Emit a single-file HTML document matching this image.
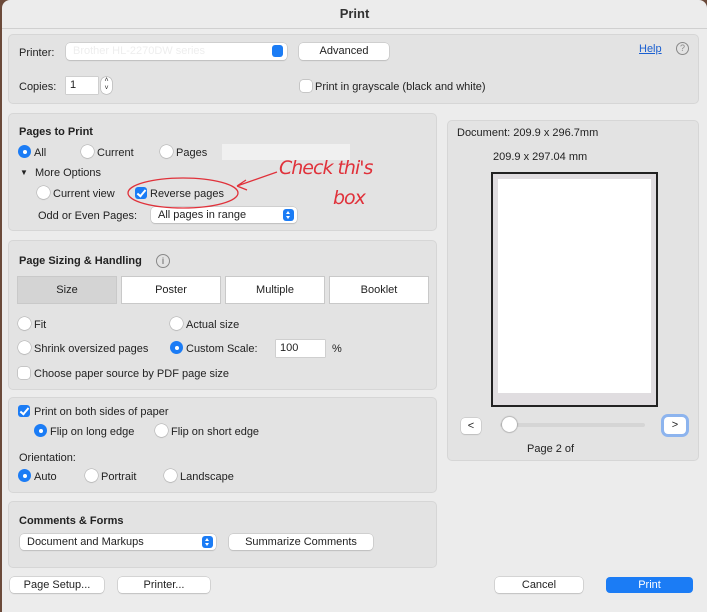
<!DOCTYPE html>
<html><head><meta charset="utf-8"><style>
*{box-sizing:border-box;margin:0;padding:0}
body{width:707px;height:612px;overflow:hidden;background:#6b4a3a;font-family:"Liberation Sans",sans-serif;font-size:11px;color:#222;position:relative}
.win{position:absolute;left:2px;top:0;width:705px;height:612px;background:#ececec;border-radius:8px 8px 0 0}
.a{position:absolute;white-space:nowrap}
.t{position:absolute;white-space:nowrap;margin-top:1px}
.panel{position:absolute;background:#e3e3e3;border:1px solid #d6d6d6;border-radius:5px}
.btn{position:absolute;background:#fff;border-radius:4px;box-shadow:0 0 0 .5px #bbb,0 1px 1px rgba(0,0,0,.15);text-align:center;line-height:17px;font-size:11px}
.sel{position:absolute;background:#fff;border-radius:4px;box-shadow:0 0 0 .5px #bbb,0 1px 1px rgba(0,0,0,.15);line-height:16px;padding-left:7px}
.sel i{position:absolute;right:3px;top:2px;width:11px;height:12px;background:#1b7cf5;border-radius:3px}
.sel i:before{content:"";position:absolute;left:3px;top:2px;border:2.5px solid transparent;border-bottom:3px solid #fff;border-top:0}
.sel i:after{content:"";position:absolute;left:3px;top:7px;border:2.5px solid transparent;border-top:3px solid #fff;border-bottom:0}
.r{position:absolute;width:13px;height:13px;border-radius:50%;background:#fff;box-shadow:0 0 0 .5px #aaa,0 1px 1px rgba(0,0,0,.1);margin-top:-1px}
.r.on{background:#1b7cf5;box-shadow:none}
.r.on:after{content:"";position:absolute;left:4.5px;top:4.5px;width:4px;height:4px;border-radius:50%;background:#fff}
.c{position:absolute;width:12px;height:12px;border-radius:3px;background:#fff;box-shadow:0 0 0 .5px #aaa;margin-top:-1px}
.c.on{background:#1b7cf5;box-shadow:none}
.c.on:after{content:"";position:absolute;left:4px;top:1px;width:3px;height:7px;border:solid #fff;border-width:0 2px 2px 0;transform:rotate(40deg)}
.b{font-weight:bold}
.tab{position:absolute;top:276px;height:28px;background:#fff;border:1px solid #c9c9c9;text-align:center;line-height:26px;font-size:11px}
.inp{position:absolute;background:#fff;box-shadow:0 0 0 .5px #bbb;line-height:17px;padding-left:4px}
</style></head><body>
<div class="win">
<div class="a b" style="left:0;width:705px;text-align:center;top:6px;font-size:13px;color:#333">Print</div>
<div class="a" style="left:0;top:28px;width:705px;height:1px;background:#d0d0d0"></div>
</div>
<div class="panel" style="left:8px;top:34px;width:691px;height:70px"></div>
<div class="t" style="left:19px;top:46px">Printer:</div>
<div class="sel" style="left:66px;top:43px;width:221px;height:17px;color:#eee">Brother HL-2270DW series</div>
<div class="a" style="left:272px;top:45px;width:11px;height:12px;background:#1b7cf5;border-radius:3px"></div>
<div class="btn" style="left:299px;top:43px;width:90px;height:17px">Advanced</div>
<div class="a" style="left:639px;top:43px;color:#1a5fd0;text-decoration:underline">Help</div>
<div class="a" style="left:676px;top:42px;width:13px;height:13px;border:1.3px solid #888;border-radius:50%;text-align:center;line-height:11px;font-size:9px;color:#888">?</div>
<div class="t" style="left:19px;top:80px">Copies:</div>
<div class="inp" style="left:66px;top:77px;width:32px;height:17px">1</div>
<div class="a" style="left:101px;top:77px;width:11px;height:17px;background:#fff;border-radius:5px;box-shadow:0 0 0 .5px #aaa;font-size:7px;line-height:8px;text-align:center">˄<br>˅</div>
<div class="c" style="left:300px;top:81px"></div>
<div class="t" style="left:315px;top:80px">Print in grayscale (black and white)</div>

<div class="panel" style="left:8px;top:113px;width:429px;height:118px"></div>
<div class="a b" style="left:19px;top:126px">Pages to Print</div>
<div class="r on" style="left:18px;top:146px"></div><div class="t" style="left:34px;top:146px">All</div>
<div class="r" style="left:81px;top:146px"></div><div class="t" style="left:97px;top:146px">Current</div>
<div class="r" style="left:160px;top:146px"></div><div class="t" style="left:176px;top:146px">Pages</div>
<div class="a" style="left:222px;top:144px;width:128px;height:16px;background:#f0f0f0"></div>
<div class="a" style="left:20px;top:168px;font-size:8px">▼</div>
<div class="t" style="left:35px;top:166px">More Options</div>
<div class="r" style="left:37px;top:187px"></div><div class="t" style="left:53px;top:187px">Current view</div>
<div class="c on" style="left:135px;top:188px"></div><div class="t" style="left:150px;top:187px">Reverse pages</div>
<div class="t" style="left:38px;top:209px">Odd or Even Pages:</div>
<div class="sel" style="left:151px;top:207px;width:146px;height:16px">All pages in range<i></i></div>
<svg class="a" style="left:0;top:0" width="440" height="240">
<ellipse cx="183" cy="193" rx="55" ry="15" fill="none" stroke="#e0313a" stroke-width="1.3"/>
<path d="M237 186 L277 172 M237 186 L246 180 M237 186 L247 190" fill="none" stroke="#e0313a" stroke-width="1.3"/>
</svg>
<div class="a" style="left:279px;top:157px;color:#e0313a;font-family:'DejaVu Sans',sans-serif;font-size:19px;font-style:italic;letter-spacing:-1px">Check thi's</div>
<div class="a" style="left:333px;top:187px;color:#e0313a;font-family:'DejaVu Sans',sans-serif;font-size:19px;font-style:italic;letter-spacing:-1px">box</div>

<div class="panel" style="left:8px;top:240px;width:429px;height:150px"></div>
<div class="a b" style="left:19px;top:255px">Page Sizing &amp; Handling</div>
<div class="a" style="left:156px;top:254px;width:14px;height:14px;border:1.3px solid #888;border-radius:50%;text-align:center;line-height:12px;font-size:9px;color:#888;font-weight:bold">i</div>
<div class="tab" style="left:17px;width:100px;background:#d4d4d4">Size</div>
<div class="tab" style="left:121px;width:100px">Poster</div>
<div class="tab" style="left:225px;width:100px">Multiple</div>
<div class="tab" style="left:329px;width:100px">Booklet</div>
<div class="r" style="left:18px;top:318px"></div><div class="t" style="left:34px;top:318px">Fit</div>
<div class="r" style="left:170px;top:318px"></div><div class="t" style="left:186px;top:318px">Actual size</div>
<div class="r" style="left:18px;top:342px"></div><div class="t" style="left:34px;top:342px">Shrink oversized pages</div>
<div class="r on" style="left:170px;top:342px"></div><div class="t" style="left:186px;top:342px">Custom Scale:</div>
<div class="inp" style="left:276px;top:340px;width:49px;height:17px">100</div>
<div class="t" style="left:332px;top:342px">%</div>
<div class="c" style="left:18px;top:368px"></div><div class="t" style="left:34px;top:367px">Choose paper source by PDF page size</div>

<div class="panel" style="left:8px;top:397px;width:429px;height:96px"></div>
<div class="c on" style="left:18px;top:406px"></div><div class="t" style="left:34px;top:405px">Print on both sides of paper</div>
<div class="r on" style="left:34px;top:425px"></div><div class="t" style="left:50px;top:425px">Flip on long edge</div>
<div class="r" style="left:155px;top:425px"></div><div class="t" style="left:171px;top:425px">Flip on short edge</div>
<div class="t" style="left:19px;top:451px">Orientation:</div>
<div class="r on" style="left:18px;top:470px"></div><div class="t" style="left:34px;top:470px">Auto</div>
<div class="r" style="left:85px;top:470px"></div><div class="t" style="left:101px;top:470px">Portrait</div>
<div class="r" style="left:164px;top:470px"></div><div class="t" style="left:180px;top:470px">Landscape</div>

<div class="panel" style="left:8px;top:501px;width:429px;height:67px"></div>
<div class="a b" style="left:19px;top:515px">Comments &amp; Forms</div>
<div class="sel" style="left:20px;top:534px;width:196px;height:16px">Document and Markups<i></i></div>
<div class="btn" style="left:229px;top:534px;width:144px;height:16px;line-height:16px">Summarize Comments</div>

<div class="btn" style="left:10px;top:577px;width:94px;height:16px;line-height:16px">Page Setup...</div>
<div class="btn" style="left:118px;top:577px;width:92px;height:16px;line-height:16px">Printer...</div>
<div class="btn" style="left:495px;top:577px;width:88px;height:16px;line-height:16px">Cancel</div>
<div class="btn" style="left:606px;top:577px;width:87px;height:16px;line-height:16px;background:#1b7cf5;color:#fff;box-shadow:none">Print</div>

<div class="panel" style="left:447px;top:120px;width:252px;height:341px"></div>
<div class="a" style="left:457px;top:127px">Document: 209.9 x 296.7mm</div>
<div class="a" style="left:493px;top:151px">209.9 x 297.04 mm</div>
<div class="a" style="left:491px;top:172px;width:167px;height:235px;border:2px solid #222;background:#e0dde0"></div>
<div class="a" style="left:498px;top:179px;width:153px;height:214px;background:#fff"></div>
<div class="btn" style="left:461px;top:418px;width:20px;height:16px;line-height:16px">&lt;</div>
<div class="a" style="left:500px;top:423px;width:145px;height:4px;background:#d5d5d5;border-radius:2px"></div>
<div class="a" style="left:502px;top:417px;width:15px;height:15px;background:#fff;border-radius:50%;box-shadow:0 0 1px 1px rgba(0,0,0,.2)"></div>
<div class="btn" style="left:664px;top:417px;width:22px;height:17px;box-shadow:0 0 0 3px #8db4ee">&gt;</div>
<div class="a" style="left:527px;top:443px">Page 2 of</div>
</body></html>
